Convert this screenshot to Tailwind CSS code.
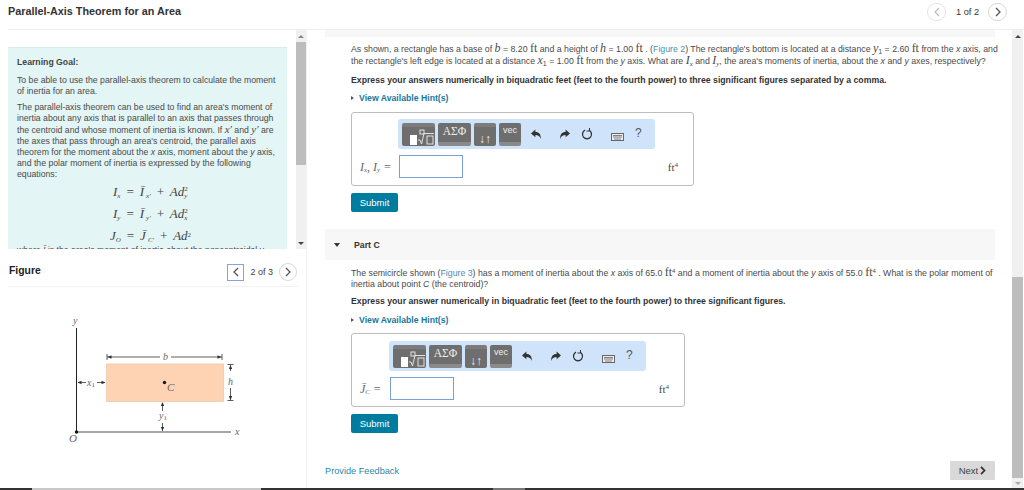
<!DOCTYPE html>
<html lang="en">
<head>
<meta charset="UTF-8">
<title>Parallel-Axis Theorem for an Area</title>
<script src="https://cdn.jsdelivr.net/npm/@tailwindcss/browser@4"></script>
</head>
<body class="bg-white">
<div class="w-[1024px] h-[490px] overflow-hidden flex flex-col font-['Liberation_Sans',Arial,sans-serif] text-[#4a4a4a]">

  <!-- header -->
  <div class="h-[30px] shrink-0 ml-2 border-b border-[#eeeeee] flex items-start justify-between">
    <h1 class="mt-[4px] text-[10.800px] leading-[15px] font-bold text-[#333]">Parallel-Axis Theorem for an Area</h1>
    <div class="flex items-center mt-[3px] mr-[17px] text-[9.200px] leading-[18px] text-[#333]">
      <span class="w-[19px] h-[18px] rounded-full border border-[#e2e2e2] flex items-center justify-center">
        <svg width="8" height="10" viewBox="0 0 8 10" fill="none" stroke="#bdbdbd" stroke-width="1.3"><path d="M6 1 2 5l4 4"/></svg>
      </span>
      <span class="ml-[10px] mr-[9px]">1 of 2</span>
      <span class="w-[19px] h-[18px] rounded-full border border-[#d8d8d8] flex items-center justify-center">
        <svg width="8" height="10" viewBox="0 0 8 10" fill="none" stroke="#555" stroke-width="1.3"><path d="M2 1l4 4-4 4"/></svg>
      </span>
    </div>
  </div>

  <div class="h-[458px] shrink-0 flex">
    <!-- left column -->
    <div class="w-[307px] shrink-0 pl-2 border-r border-[#f2f2f2] flex flex-col">
      <div class="h-[220px] shrink-0 flex">
        <div class="w-[279px] pt-[17px] overflow-hidden h-[219px]">
          <div class="bg-[#e4f5f5] border-t border-[#dcebeb] px-[9px] pt-[8px] pb-4 text-[8.700px] leading-[11px] whitespace-nowrap">
            <p class="font-bold text-[#444] leading-[13px]">Learning Goal:</p>
            <p class="mt-[6px]">To be able to use the parallel-axis theorem to calculate the moment<br>of inertia for an area.</p>
            <p class="mt-[5px]">The parallel-axis theorem can be used to find an area's moment of<br>inertia about any axis that is parallel to an axis that passes through<br>the centroid and whose moment of inertia is known. If <i class="font-['Liberation_Serif',serif] text-[11px]">x&#8242;</i> and <i class="font-['Liberation_Serif',serif] text-[11px]">y&#8242;</i> are<br>the axes that pass through an area's centroid, the parallel axis<br>theorem for the moment about the <i>x</i> axis, moment about the <i>y</i> axis,<br>and the polar moment of inertia is expressed by the following<br>equations:</p>
            <div class="mt-[1px] ml-[96px] font-['Liberation_Serif',serif] italic text-[13px] leading-[22px] text-[#444] [word-spacing:2px]">
              <div>I<sub class="text-[7px]">x</sub> = I&#772;<sub class="text-[7px] ml-[2px]">x&#8242;</sub> + Ad<span class="inline-flex flex-col align-middle text-[7px] leading-[7px] not-italic"><span>2</span><span class="italic">y</span></span></div>
              <div>I<sub class="text-[7px]">y</sub> = I&#772;<sub class="text-[7px] ml-[2px]">y&#8242;</sub> + Ad<span class="inline-flex flex-col align-middle text-[7px] leading-[7px] not-italic"><span>2</span><span class="italic">x</span></span></div>
              <div class="-ml-[3px]">J<sub class="text-[7px]">O</sub> = J&#772;<sub class="text-[7px] ml-[2px]">C&#8242;</sub> + Ad<sup class="text-[7px] not-italic">2</sup></div>
            </div>
            <p class="-mt-[2px]">where <i>I&#772;</i> is the area's moment of inertia about the noncentroidal y</p>
          </div>
        </div>
        <!-- left scrollbar -->
        <div class="w-[10px] ml-[9px] h-[219px] bg-[#f0f0f0] flex flex-col items-center">
          <div class="h-[12px] flex items-center"><div class="w-0 h-0 border-x-[3px] border-x-transparent border-b-[3px] border-b-[#888]"></div></div>
          <div class="w-full h-[123px] bg-[#bdbdbd]"></div>
          <div class="mt-auto h-[12px] flex items-center"><div class="w-0 h-0 border-x-[3px] border-x-transparent border-t-[3px] border-t-[#444]"></div></div>
        </div>
      </div>

      <!-- figure -->
      <div class="w-[290px] h-[37px] shrink-0 border-b border-[#f2f2f2] flex items-start justify-between">
        <h2 class="mt-[14px] ml-[1px] text-[10.400px] leading-[14px] font-bold text-[#222]">Figure</h2>
        <div class="mt-[13px] mr-[1px] flex items-center text-[9px] leading-[17px] text-[#444]">
          <span class="w-[17px] h-[17px] border border-[#7ea6e6] flex items-center justify-center">
            <svg width="8" height="10" viewBox="0 0 8 10" fill="none" stroke="#555" stroke-width="1.3"><path d="M6 1 2 5l4 4"/></svg>
          </span>
          <span class="ml-[6px] mr-[6px]">2 of 3</span>
          <span class="w-[18px] h-[18px] rounded-full border border-[#d8d8d8] flex items-center justify-center">
            <svg width="8" height="10" viewBox="0 0 8 10" fill="none" stroke="#555" stroke-width="1.3"><path d="M2 1l4 4-4 4"/></svg>
          </span>
        </div>
      </div>
      <svg class="-ml-2 shrink-0" width="306" height="170" viewBox="0 288 306 170" font-family="Liberation Serif, serif" font-style="italic" font-size="10" fill="#666">
        <rect x="106.500" y="365" width="117" height="37.500" fill="#fdd3b3" stroke="#ecc9ae" stroke-width="0.8"/>
        <line x1="76.500" y1="329" x2="76.500" y2="433" stroke="#222" stroke-width="1"/>
        <line x1="77" y1="433" x2="231" y2="433" stroke="#a6a6a6" stroke-width="2"/>
        <circle cx="76.500" cy="433" r="1.700" fill="#111"/>
        <circle cx="164.500" cy="383.500" r="1.700" fill="#111"/>
        <g stroke="#333" stroke-width="0.8" fill="none">
          <path d="M107 358h53M171 358h51M107 355v6M222 355v6"/>
          <path d="M78 383.500h8M97 383.500h8"/>
          <path d="M230.500 366v6M230.500 389v12M227.500 365.500h6M227.500 401.500h6"/>
          <path d="M162.500 404v8M162.500 424v8"/>
        </g>
        <g fill="#333">
          <path d="M107.500 358l4-1.700v3.400zM221.500 358l-4-1.700v3.400z"/>
          <path d="M77.500 383.500l4-1.700v3.400zM105.500 383.500l-4-1.700v3.400z"/>
          <path d="M230.500 366l-1.700 4h3.400zM230.500 401l-1.700-4h3.400z"/>
          <path d="M162.500 403l-1.700 4h3.400zM162.500 432l-1.700-4h3.400z"/>
        </g>
        <text x="73" y="325">y</text>
        <text x="163" y="361">b</text>
        <text x="87" y="386.500">x<tspan font-style="normal" font-size="7" dy="1">1</tspan></text>
        <text x="228" y="385.500">h</text>
        <text x="167" y="392" font-size="11">C</text>
        <text x="159" y="420">y<tspan font-style="normal" font-size="7" dy="1">1</tspan></text>
        <text x="235" y="436">x</text>
        <text x="69" y="443" font-size="11">O</text>
      </svg>
    </div>

    <!-- right column -->
    <div class="w-[698px] ml-[18px] shrink-0 flex flex-col relative">
      <div class="h-[7px] shrink-0 w-[670px] bg-[#f7f7f7]"></div>
      <div class="pl-[26px] w-[670px] flex-1 flex flex-col text-[8.750px] leading-[12px]">
        <p class="mt-[6px] whitespace-nowrap">As shown, a rectangle has a base of <i class="font-['Liberation_Serif',serif] text-[12px] leading-[10px]">b</i> = 8.20 <span class="font-['Liberation_Serif',serif] text-[12px] leading-[10px]">ft</span> and a height of <i class="font-['Liberation_Serif',serif] text-[12px] leading-[10px]">h</i> = 1.00 <span class="font-['Liberation_Serif',serif] text-[12px] leading-[10px]">ft</span> . (<span class="text-[#4a8fb5]">Figure 2</span>) The rectangle's bottom is located at a distance <i class="font-['Liberation_Serif',serif] text-[12px] leading-[10px]">y</i><sub class="text-[7px]">1</sub> = 2.60 <span class="font-['Liberation_Serif',serif] text-[12px] leading-[10px]">ft</span> from the <i>x</i> axis, and<br>the rectangle's left edge is located at a distance <i class="font-['Liberation_Serif',serif] text-[12px] leading-[10px]">x</i><sub class="text-[7px]">1</sub> = 1.00 <span class="font-['Liberation_Serif',serif] text-[12px] leading-[10px]">ft</span> from the <i>y</i> axis. What are <i class="font-['Liberation_Serif',serif] text-[12px] leading-[10px]">I<sub class="text-[7px]">x</sub></i> and <i class="font-['Liberation_Serif',serif] text-[12px] leading-[10px]">I<sub class="text-[7px]">y</sub></i>, the area's moments of inertia, about the <i>x</i> and <i>y</i> axes, respectively?</p>
        <p class="mt-[7px] font-bold text-[#333] whitespace-nowrap text-[8.700px]">Express your answers numerically in biquadratic feet (feet to the fourth power) to three significant figures separated by a comma.</p>
        <p class="mt-[6px] font-bold text-[#16789c] flex items-center text-[8.700px]"><span class="w-0 h-0 mr-[5px] border-y-[2.500px] border-y-transparent border-l-[3px] border-l-[#555]"></span>View Available Hint(s)</p>

        <!-- answer box 1 -->
        <div class="mt-[8px] w-[343px] h-[74px] border border-[#bdbdbd] rounded-[3px] shrink-0 relative">
          <div class="ml-[46px] mt-[6px] w-[257px] h-[30px] bg-[#cfe4fb] rounded-[3px] flex items-center pl-[4px]">
            <span class="w-[33px] h-[23px] rounded-[2px] bg-[#6e6e6e] border-t-[4px] border-t-[#7c7c7c] flex items-end justify-end pr-[1px] pb-[1px] gap-[1px]">
              <span class="w-[7px] h-[10px] bg-white"></span>
              <svg width="16" height="16" viewBox="0 0 16 16" fill="none" stroke="#eee" stroke-width="0.9"><path d="M0 11h2l1.500 4L6 4.500h10"/><rect x="2" y="1" width="4" height="4"/><rect x="9" y="7" width="6" height="8"/></svg>
            </span>
            <span class="ml-[3px] w-[33px] h-[23px] rounded-[2px] bg-[#6e6e6e] border-b-[4px] border-b-[#8a8a8a] text-[#eee] text-[11.500px] leading-[16px] text-center font-['Liberation_Serif',serif]">&Alpha;&Sigma;&Phi;</span>
            <span class="ml-[3px] w-[22px] h-[23px] rounded-[2px] bg-[#6e6e6e] border-t-[4px] border-t-[#7c7c7c] text-[#eee] text-[12px] leading-[24px] text-center font-bold">&#8595;&#8593;</span>
            <span class="ml-[3px] w-[22px] h-[23px] rounded-[2px] bg-[#6e6e6e] border-b-[4px] border-b-[#8a8a8a] text-[#eee] text-[9px] leading-[14px] text-center">vec</span>
            <svg class="ml-[10px]" width="11" height="11" viewBox="0 0 10 10" fill="#333"><path d="M0 4 4 .5v2.200C7.500 2.700 9 5 9 9 8 6.500 6.500 5.500 4 5.500v2z"/></svg>
            <svg class="ml-[17px]" width="11" height="11" viewBox="0 0 10 10" fill="#333"><path d="M10 4 6 .5v2.200C2.500 2.700 1 5 1 9c1-2.500 2.500-3.500 5-3.500v2z"/></svg>
            <svg class="ml-[11px]" width="12" height="12" viewBox="0 0 12 12" fill="none" stroke="#333" stroke-width="1.300"><path d="M4 2.200a4.500 4.500 0 1 0 4 0"/><path d="M8.500 0v3H5.500" stroke-width="1"/></svg>
            <svg class="ml-[18px] mt-[6px]" width="13" height="8" viewBox="0 0 13 8"><rect x="0.500" y="0.500" width="12" height="7" fill="#eee" stroke="#666"/><path d="M2 2.500h9M2 4h9M3 6h7" stroke="#666" stroke-width="0.800"/></svg>
            <span class="ml-[11px] -mt-[3px] text-[12px] text-[#555]">?</span>
          </div>
          <div class="absolute left-[8px] top-[42px] w-[333px] flex items-center">
            <span class="w-[39px] font-['Liberation_Serif',serif] italic text-[12px] whitespace-nowrap text-[#666]">I<sub class="text-[7px]">x</sub>, I<sub class="text-[7px]">y</sub> =</span>
            <span class="w-[64px] h-[23px] border border-[#7a9fdc] bg-white"></span>
            <span class="ml-auto mr-[15px] font-['Liberation_Serif',serif] text-[11px]">ft<sup class="text-[7px]">4</sup></span>
          </div>
        </div>
        <button class="mt-[7px] w-[47px] h-[19px] rounded-[2px] bg-[#007c9f] text-white text-[9.500px] leading-[19px] shrink-0">Submit</button>

        <!-- part C -->
        <div class="-ml-[26px] mt-[17px] h-[31px] shrink-0 bg-[#f7f7f7] flex items-center">
          <span class="ml-[9px] w-0 h-0 border-x-[3.500px] border-x-transparent border-t-[4px] border-t-[#333]"></span>
          <span class="ml-[14px] font-bold text-[#333]">Part C</span>
        </div>
        <p class="mt-[7px] whitespace-nowrap leading-[11px]">The semicircle shown (<span class="text-[#4a8fb5]">Figure 3</span>) has a moment of inertia about the <i>x</i> axis of 65.0 <span class="font-['Liberation_Serif',serif] text-[12px] leading-[10px]">ft</span><sup class="text-[6px]">4</sup> and a moment of inertia about the <i>y</i> axis of 55.0 <span class="font-['Liberation_Serif',serif] text-[12px] leading-[10px]">ft</span><sup class="text-[6px]">4</sup> . What is the polar moment of<br>inertia about point <i>C</i> (the centroid)?</p>
        <p class="mt-[5px] font-bold text-[#333] whitespace-nowrap text-[8.700px]">Express your answer numerically in biquadratic feet (feet to the fourth power) to three significant figures.</p>
        <p class="mt-[7px] font-bold text-[#16789c] flex items-center text-[8.700px]"><span class="w-0 h-0 mr-[5px] border-y-[2.500px] border-y-transparent border-l-[3px] border-l-[#555]"></span>View Available Hint(s)</p>

        <!-- answer box 2 -->
        <div class="mt-[7px] w-[334px] h-[74px] border border-[#bdbdbd] rounded-[3px] shrink-0 relative">
          <div class="ml-[37px] mt-[7px] w-[257px] h-[30px] bg-[#cfe4fb] rounded-[3px] flex items-center pl-[4px]">
            <span class="w-[33px] h-[23px] rounded-[2px] bg-[#6e6e6e] border-t-[4px] border-t-[#7c7c7c] flex items-end justify-end pr-[1px] pb-[1px] gap-[1px]">
              <span class="w-[7px] h-[10px] bg-white"></span>
              <svg width="16" height="16" viewBox="0 0 16 16" fill="none" stroke="#eee" stroke-width="0.9"><path d="M0 11h2l1.500 4L6 4.500h10"/><rect x="2" y="1" width="4" height="4"/><rect x="9" y="7" width="6" height="8"/></svg>
            </span>
            <span class="ml-[3px] w-[33px] h-[23px] rounded-[2px] bg-[#6e6e6e] border-b-[4px] border-b-[#8a8a8a] text-[#eee] text-[11.500px] leading-[16px] text-center font-['Liberation_Serif',serif]">&Alpha;&Sigma;&Phi;</span>
            <span class="ml-[3px] w-[22px] h-[23px] rounded-[2px] bg-[#6e6e6e] border-t-[4px] border-t-[#7c7c7c] text-[#eee] text-[12px] leading-[24px] text-center font-bold">&#8595;&#8593;</span>
            <span class="ml-[3px] w-[22px] h-[23px] rounded-[2px] bg-[#6e6e6e] border-b-[4px] border-b-[#8a8a8a] text-[#eee] text-[9px] leading-[14px] text-center">vec</span>
            <svg class="ml-[10px]" width="11" height="11" viewBox="0 0 10 10" fill="#333"><path d="M0 4 4 .5v2.200C7.500 2.700 9 5 9 9 8 6.500 6.500 5.500 4 5.500v2z"/></svg>
            <svg class="ml-[17px]" width="11" height="11" viewBox="0 0 10 10" fill="#333"><path d="M10 4 6 .5v2.200C2.500 2.700 1 5 1 9c1-2.500 2.500-3.500 5-3.500v2z"/></svg>
            <svg class="ml-[11px]" width="12" height="12" viewBox="0 0 12 12" fill="none" stroke="#333" stroke-width="1.300"><path d="M4 2.200a4.500 4.500 0 1 0 4 0"/><path d="M8.500 0v3H5.500" stroke-width="1"/></svg>
            <svg class="ml-[18px] mt-[6px]" width="13" height="8" viewBox="0 0 13 8"><rect x="0.500" y="0.500" width="12" height="7" fill="#eee" stroke="#666"/><path d="M2 2.500h9M2 4h9M3 6h7" stroke="#666" stroke-width="0.800"/></svg>
            <span class="ml-[11px] -mt-[3px] text-[12px] text-[#555]">?</span>
          </div>
          <div class="absolute left-[8px] top-[43px] w-[324px] flex items-center">
            <span class="w-[30px] font-['Liberation_Serif',serif] italic text-[12px] whitespace-nowrap text-[#666]">J&#772;<sub class="text-[7px]">C</sub> =</span>
            <span class="w-[64px] h-[23px] border border-[#7a9fdc] bg-white"></span>
            <span class="ml-auto mr-[15px] font-['Liberation_Serif',serif] text-[11px]">ft<sup class="text-[7px]">4</sup></span>
          </div>
        </div>
        <button class="mt-[7px] w-[47px] h-[19px] rounded-[2px] bg-[#007c9f] text-white text-[9.500px] leading-[19px] shrink-0">Submit</button>

        <!-- footer -->
        <div class="-ml-[26px] mt-[28px] h-[19px] shrink-0 flex items-center justify-between">
          <a class="text-[#2f86a8] text-[9.200px]">Provide Feedback</a>
          <span class="w-[45px] h-[19px] bg-[#d9d9d9] text-[#444] text-[9.500px] flex items-center justify-center gap-[2px] rounded-[1px]">Next
            <svg width="6" height="9" viewBox="0 0 6 9" fill="none" stroke="#333" stroke-width="1.800"><path d="M1 .8l3.500 3.700L1 8.200"/></svg>
          </span>
        </div>
      </div>

      <!-- right scrollbar -->
      <div class="absolute right-0 top-0 h-[458px] w-[11px] bg-[#f0f0f0] flex flex-col items-center">
        <div class="h-[12px] flex items-center"><div class="w-0 h-0 border-x-[3px] border-x-transparent border-b-[3px] border-b-[#444]"></div></div>
        <div class="mt-[235px] w-full h-[201px] bg-[#bdbdbd]"></div>
        <div class="h-[10px] flex items-center"><div class="w-0 h-0 border-x-[3px] border-x-transparent border-t-[3px] border-t-[#aaa]"></div></div>
      </div>
    </div>
  </div>

  <!-- window edge -->
  <div class="h-[2px] shrink-0 flex bg-[#333]">
    <div class="ml-[32px] w-[229px] bg-[#c8c8c8]"></div>
    <div class="ml-[232px] w-[32px] bg-[#777]"></div>
  </div>
</div>
</body>
</html>
